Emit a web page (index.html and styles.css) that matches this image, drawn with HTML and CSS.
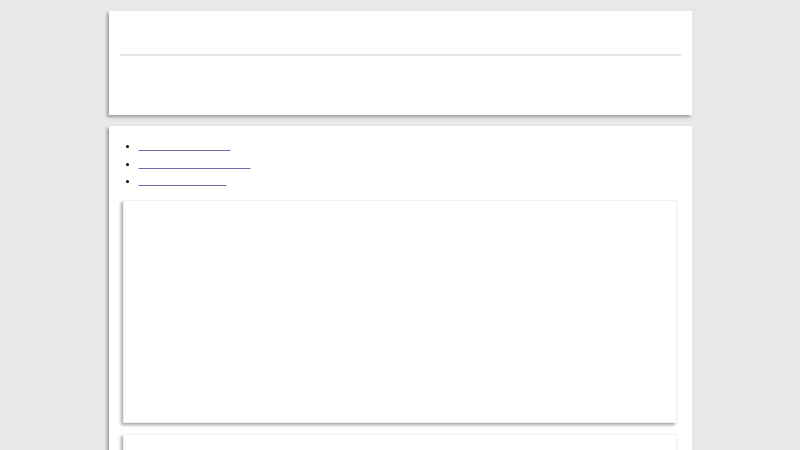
FILE: index.html
```html
<!DOCTYPE html>
<html lang="en">
<head>
  <meta charset="UTF-8">
  <meta name="viewport" content="width=device-width, initial-scale=1.0">
  <title>Page</title>
  <link rel="stylesheet" href="styles.css">
</head>
<body>
  <!-- Header card -->
  <div class="card card-head">
    <div class="head-title"></div>
    <hr class="head-rule">
    <div class="head-body"></div>
  </div>

  <!-- Main card -->
  <div class="card card-main">
    <ul class="nav-list">
      <li><a href="#" class="nav-link">&nbsp;&nbsp;&nbsp;&nbsp;&nbsp;&nbsp;&nbsp;&nbsp;&nbsp;&nbsp;&nbsp;&nbsp;&nbsp;&nbsp;&nbsp;&nbsp;&nbsp;&nbsp;&nbsp;&nbsp;&nbsp;&nbsp;&nbsp;</a></li>
      <li><a href="#" class="nav-link">&nbsp;&nbsp;&nbsp;&nbsp;&nbsp;&nbsp;&nbsp;&nbsp;&nbsp;&nbsp;&nbsp;&nbsp;&nbsp;&nbsp;&nbsp;&nbsp;&nbsp;&nbsp;&nbsp;&nbsp;&nbsp;&nbsp;&nbsp;&nbsp;&nbsp;&nbsp;&nbsp;&nbsp;</a></li>
      <li><a href="#" class="nav-link">&nbsp;&nbsp;&nbsp;&nbsp;&nbsp;&nbsp;&nbsp;&nbsp;&nbsp;&nbsp;&nbsp;&nbsp;&nbsp;&nbsp;&nbsp;&nbsp;&nbsp;&nbsp;&nbsp;&nbsp;&nbsp;&nbsp;</a></li>
    </ul>
    <div class="panel panel-tall"></div>
    <div class="panel panel-next"></div>
  </div>
</body>
</html>
```

FILE: styles.css
```css
* {
  box-sizing: border-box;
}

body {
  margin: 0;
  padding-top: 11px;
  background: #e8e8e8;
  font-family: "Liberation Serif", serif;
  font-size: 16px;
  overflow: hidden;
}

.card {
  width: 583px;
  margin: 0 auto 11px;
  background: #fff;
  box-shadow: -2px 2px 3px rgba(0, 0, 0, 0.35);
}

.card-head {
  height: 104px;
  padding: 0 11px;
}

.head-title {
  height: 43px;
}

.head-rule {
  margin: 0;
  border: none;
  height: 2px;
  background: #e6e6e6;
}

.head-body {
  height: 59px;
}

.card-main {
  padding: 9px 15px 14px 14px;
}

.nav-list {
  margin: 0 0 12px;
  padding-left: 16px;
  line-height: 17.5px;
}

.nav-list li::marker {
  font-size: 11px;
}

.nav-link {
  color: #4a4a9a;
  text-decoration-color: #6b6ba8;
}

.panel {
  background: #fff;
  border: 1px solid #f0f0f0;
  box-shadow: -2px 2px 3px rgba(0, 0, 0, 0.35);
}

.panel-tall {
  height: 223px;
  margin-bottom: 11px;
}

.panel-next {
  height: 120px;
}
```
